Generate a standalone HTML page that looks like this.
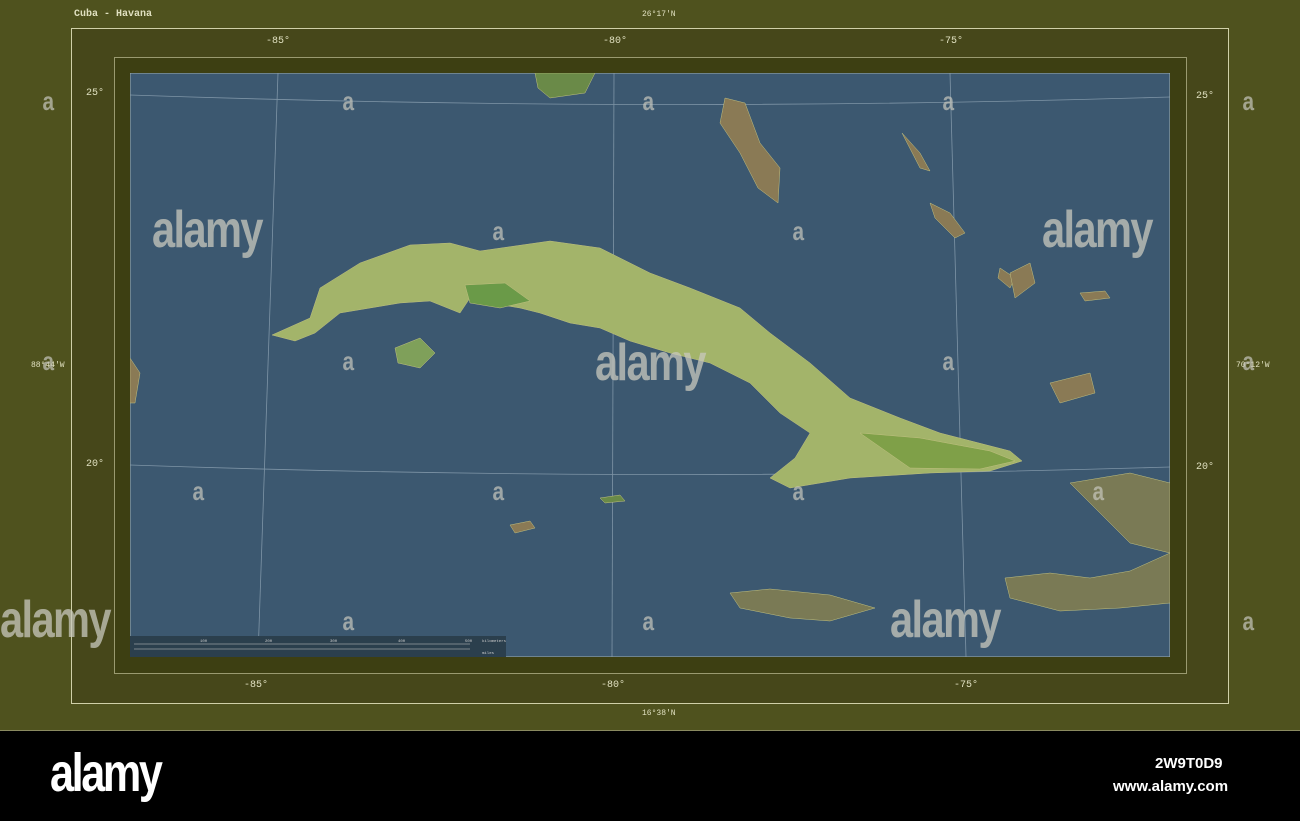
<!DOCTYPE html>
<html><head><meta charset="utf-8"><style>
body{margin:0;width:1300px;height:821px;background:#000;position:relative;overflow:hidden;font-family:"Liberation Mono",monospace}
.t{position:absolute;color:#e0e0c0;font-size:10px}
.w{position:absolute;font-family:"Liberation Sans",sans-serif;font-weight:bold;color:rgba(200,200,190,.75);letter-spacing:-2px;transform:scaleX(.8);transform-origin:left}
.a{position:absolute;font:bold 26px "Liberation Sans",sans-serif;color:rgba(200,200,190,.7);transform:scaleX(.8)}
</style></head><body>
<div style="position:absolute;left:0;top:0;width:1300px;height:730px;background:#4f521e;border-bottom:1px solid #8a8a60"></div>
<div style="position:absolute;left:71px;top:28px;width:1156px;height:674px;border:1px solid #d0d0a8;background:#46471a"></div>
<div style="position:absolute;left:114px;top:57px;width:1071px;height:615px;border:1px solid #9a9a70;background:#3d3f12"></div>
<svg style="position:absolute;left:130px;top:73px" width="1040" height="584" viewBox="0 0 1040 584">
<rect width="1040" height="584" fill="#3c5870" stroke="#a0b0b0"/>
<g stroke="#8fa4b4" stroke-width="0.8" fill="none" opacity=".8">
<path d="M0 22 Q520 40 1040 24"/><path d="M0 392 Q520 410 1040 394"/>
<line x1="148" y1="0" x2="128" y2="584"/><line x1="484" y1="0" x2="482" y2="584"/><line x1="820" y1="0" x2="836" y2="584"/>
</g>
<g fill="#7fa05a" stroke="#c0c080" stroke-width=".5">
<path d="M142 262 L180 245 L190 215 L230 190 L280 172 L320 170 L350 178 L420 168 L470 175 L520 200 L560 215 L610 235 L640 260 L680 290 L720 325 L770 345 L810 360 L880 378 L892 388 L860 398 L800 400 L720 405 L660 415 L640 405 L665 385 L680 360 L650 340 L620 310 L580 290 L540 280 L500 268 L470 255 L440 250 L410 240 L390 235 L360 230 L340 225 L330 240 L300 228 L270 230 L240 235 L210 240 L185 260 L165 268 Z" fill="#a3b46a"/>
<path d="M335 212 L375 210 L400 228 L370 235 L340 230 Z" fill="#6a9a48"/>
<path d="M265 275 L290 265 L305 280 L290 295 L268 290 Z"/>
<path d="M730 360 L790 365 L860 378 L885 388 L850 396 L780 395 Z" fill="#7fa048"/>
<path d="M600 520 L640 516 L700 522 L745 535 L700 548 L660 545 L610 535 Z" fill="#7a7a55"/>
<path d="M875 505 L920 500 L960 505 L1000 498 L1040 480 L1040 530 L990 535 L930 538 L880 525 Z" fill="#7a7a55"/>
<path d="M940 410 L1000 400 L1040 410 L1040 480 L1000 470 Z" fill="#7a7a55"/>
<path d="M595 25 L615 30 L630 70 L650 95 L648 130 L628 115 L610 80 L590 50 Z" fill="#8a7a55"/>
<path d="M405 0 L465 0 L455 20 L420 25 L408 15 Z" fill="#6a8a48"/>
<path d="M920 310 L960 300 L965 320 L930 330 Z" fill="#8a7a55"/>
<path d="M772 60 L790 80 L800 98 L790 95 Z" fill="#8a7a55"/>
<path d="M800 130 L820 140 L835 160 L825 165 L805 145 Z" fill="#8a7a55"/>
<path d="M870 195 L885 205 L880 215 L868 205 Z" fill="#8a7a55"/>
<path d="M880 200 L900 190 L905 210 L885 225 Z" fill="#8a7a55"/>
<path d="M950 220 L975 218 L980 225 L955 228 Z" fill="#8a7a55"/>
<path d="M380 452 L400 448 L405 455 L385 460 Z" fill="#8a7a55"/>
<path d="M470 425 L490 422 L495 428 L475 430 Z" fill="#6a8a48"/>
<path d="M0 285 L10 300 L5 330 L0 330 Z" fill="#8a7a55"/>
</g>
<rect x="0" y="563" width="376" height="21" fill="#2b3f4d"/>
<line x1="4" y1="571" x2="340" y2="571" stroke="#ccc" stroke-width=".6"/>
<line x1="4" y1="576" x2="340" y2="576" stroke="#ccc" stroke-width=".6"/>
<g fill="#ccc" font-size="4" font-family="Liberation Mono"><text x="70" y="569">100</text><text x="135" y="569">200</text><text x="200" y="569">300</text><text x="268" y="569">400</text><text x="335" y="569">500</text><text x="352" y="569">kilometers</text><text x="352" y="581">miles</text></g>
</svg>
<div class="t" style="left:74px;top:9px;font-weight:bold">Cuba - Havana</div>
<div class="t" style="left:642px;top:10px;font-size:8px">26°17′N</div>
<div class="t" style="left:642px;top:709px;font-size:8px">16°38′N</div>
<div class="t" style="left:31px;top:361px;font-size:8px">88°44′W</div>
<div class="t" style="left:1236px;top:361px;font-size:8px">70°12′W</div>
<div class="t" style="left:266px;top:36px">-85°</div><div class="t" style="left:603px;top:36px">-80°</div><div class="t" style="left:939px;top:36px">-75°</div>
<div class="t" style="left:244px;top:680px">-85°</div><div class="t" style="left:601px;top:680px">-80°</div><div class="t" style="left:954px;top:680px">-75°</div>
<div class="t" style="left:86px;top:88px">25°</div><div class="t" style="left:86px;top:459px">20°</div>
<div class="t" style="left:1196px;top:91px">25°</div><div class="t" style="left:1196px;top:462px">20°</div>
<div class="a" style="left:41px;top:86px">a</div><div class="a" style="left:341px;top:86px">a</div><div class="a" style="left:641px;top:86px">a</div><div class="a" style="left:941px;top:86px">a</div><div class="a" style="left:1241px;top:86px">a</div>
<div class="a" style="left:491px;top:216px">a</div><div class="a" style="left:791px;top:216px">a</div>
<div class="a" style="left:41px;top:346px">a</div><div class="a" style="left:341px;top:346px">a</div><div class="a" style="left:941px;top:346px">a</div><div class="a" style="left:1241px;top:346px">a</div>
<div class="a" style="left:191px;top:476px">a</div><div class="a" style="left:491px;top:476px">a</div><div class="a" style="left:791px;top:476px">a</div><div class="a" style="left:1091px;top:476px">a</div>
<div class="a" style="left:341px;top:606px">a</div><div class="a" style="left:641px;top:606px">a</div><div class="a" style="left:1241px;top:606px">a</div>
<div class="w" style="left:152px;top:200px;font-size:52px">alamy</div>
<div class="w" style="left:1042px;top:200px;font-size:52px">alamy</div>
<div class="w" style="left:595px;top:333px;font-size:52px">alamy</div>
<div class="w" style="left:0;top:590px;font-size:52px">alamy</div>
<div class="w" style="left:890px;top:590px;font-size:52px">alamy</div>
<div style="position:absolute;left:50px;top:742px;font:bold 54px 'Liberation Sans',sans-serif;color:#fff;letter-spacing:-3px;transform:scaleX(.8);transform-origin:left">alamy</div>
<div style="position:absolute;left:1155px;top:755px;font:bold 15px 'Liberation Sans',sans-serif;color:#fff">2W9T0D9</div>
<div style="position:absolute;left:1113px;top:778px;font:bold 15px 'Liberation Sans',sans-serif;color:#fff">www.alamy.com</div>
</body></html>
